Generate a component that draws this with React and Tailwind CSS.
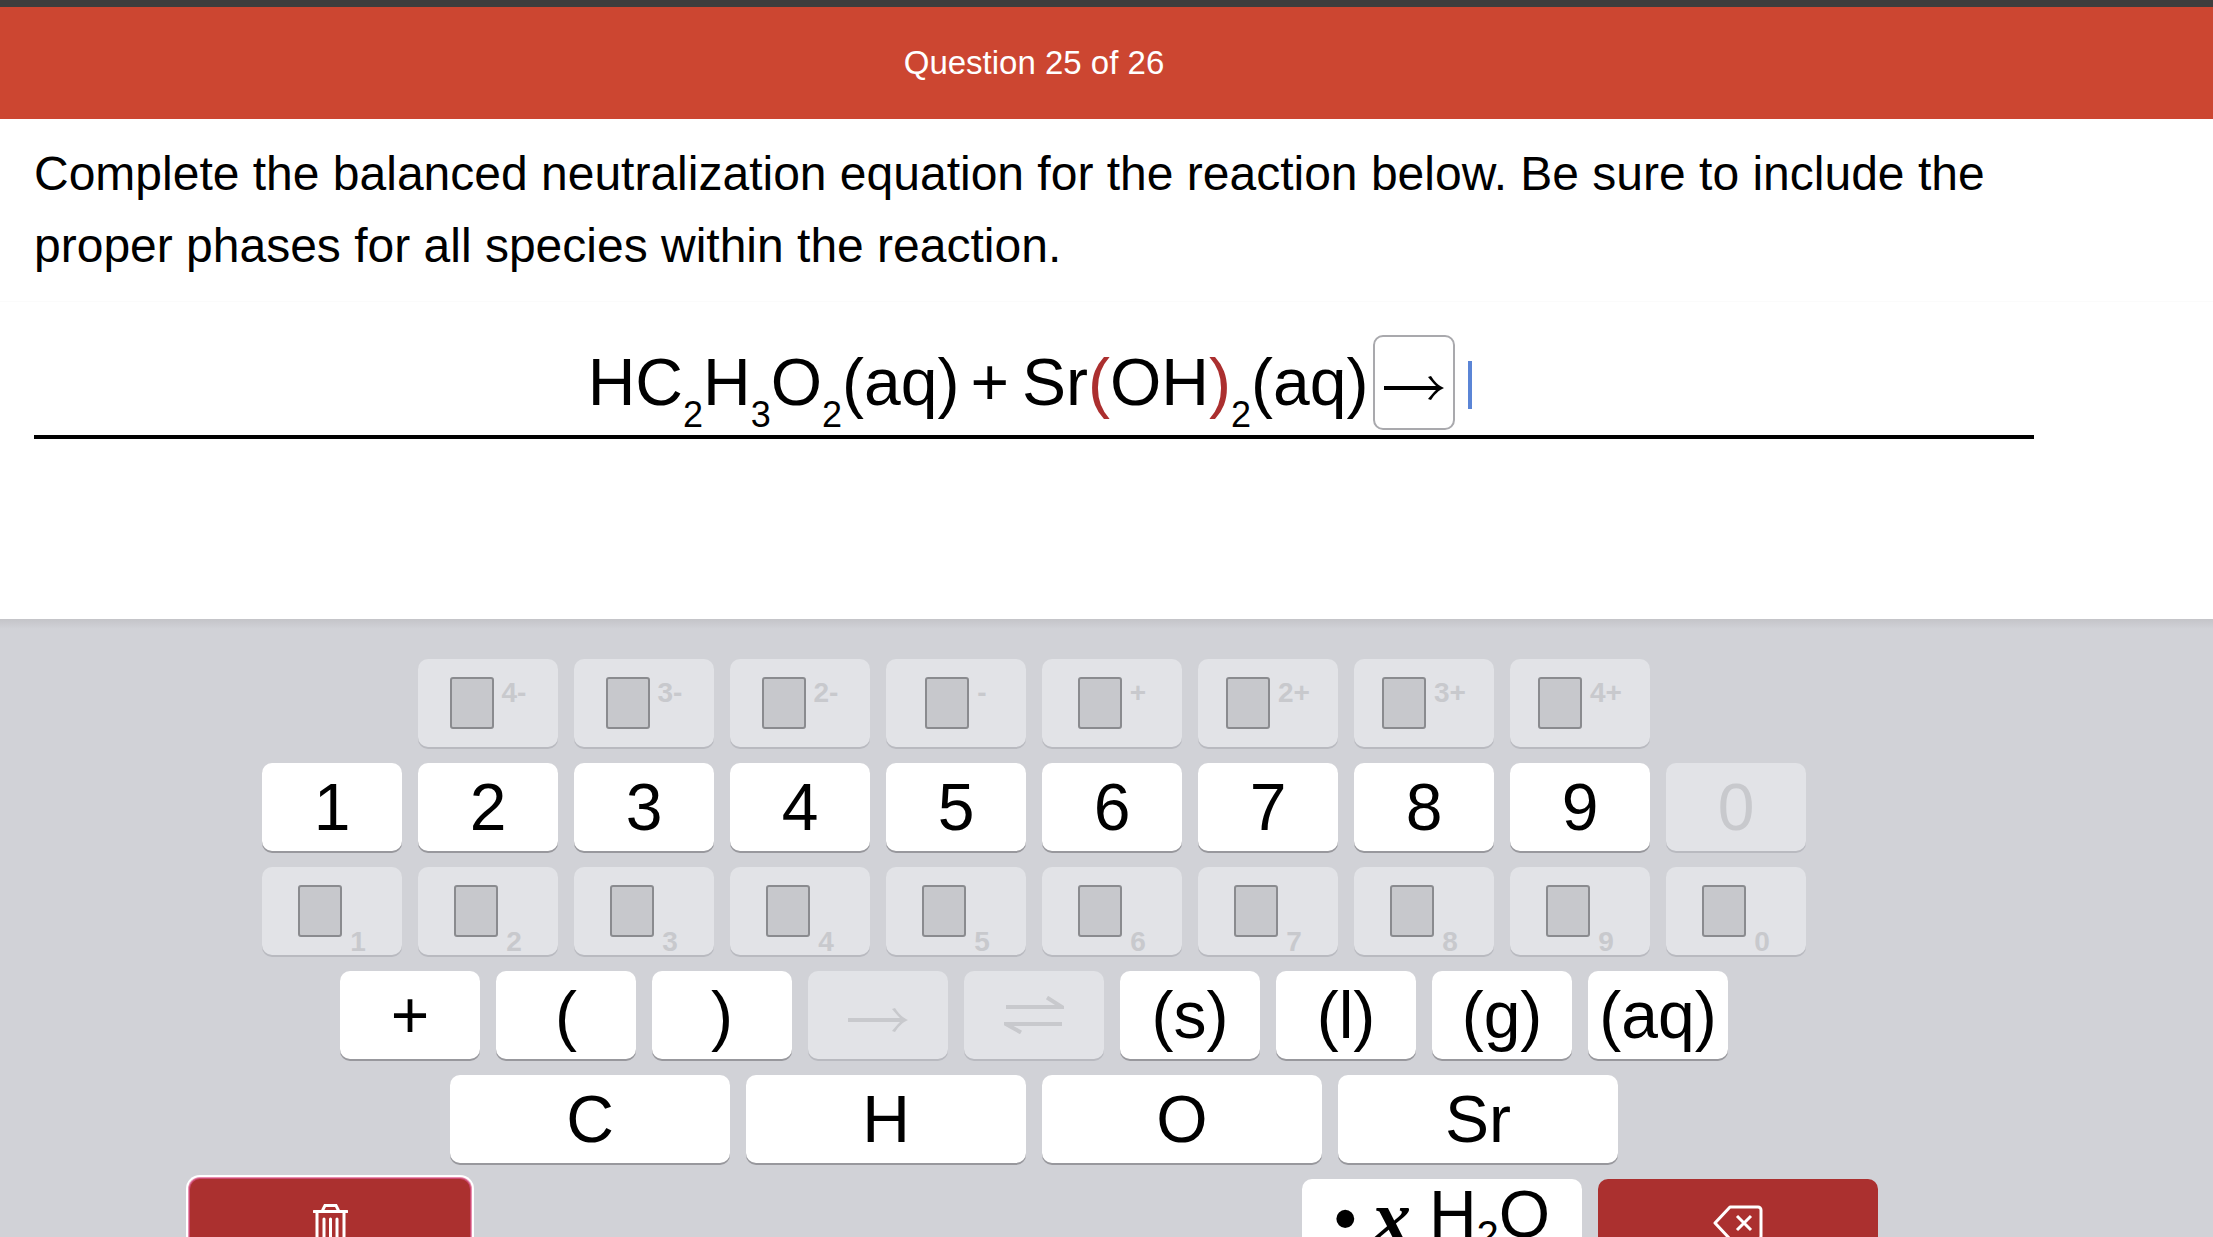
const sans = "font-['Liberation_Sans',sans-serif]";

const charges = ["4-", "3-", "2-", "-", "+", "2+", "3+", "4+"];
const digits = ["1", "2", "3", "4", "5", "6", "7", "8", "9"];
const subscripts = ["1", "2", "3", "4", "5", "6", "7", "8", "9", "0"];
const phases = ["(s)", "(l)", "(g)", "(aq)"];
const elements = ["C", "H", "O", "Sr"];

function Key({ children, disabled, wide, className = "" }) {
  return (
    <div
      className={`flex h-[88px] shrink-0 rounded-[10px] ${wide ? "w-[280px]" : "w-[140px]"} ${
        disabled
          ? "bg-[#e2e3e7] text-[#c8c9cd] shadow-[0_2px_0_#b9bac0]"
          : "bg-white text-black shadow-[0_2px_0_#98989d]"
      } ${className}`}
    >
      {children}
    </div>
  );
}

function TextKey({ label, disabled, wide }) {
  return (
    <Key disabled={disabled} wide={wide} className="items-center justify-center text-[66px] leading-none">
      {label}
    </Key>
  );
}

function Slot() {
  return <div className="h-[52px] w-[44px] shrink-0 rounded-[3px] border-2 border-[#8a8b8f] bg-[#c7c8cc]" />;
}

function ArrowGlyph({ className }) {
  return (
    <svg viewBox="0 0 60 24" className={className} fill="currentColor">
      <path d="M0 10H52C49 7.5 46 3 44 1L47 0C50 5 55 10 60 12C55 14 50 19 47 24L44 23C46 21 49 16.5 52 14H0Z" />
    </svg>
  );
}

function Equation() {
  const sub = "align-[-22px] text-[36px]";
  return (
    <div className="mx-[34px] flex h-[137px] w-[2000px] shrink-0 items-start justify-center border-b-4 border-black pr-[8px] pt-[33px]">
      <div className="mt-[14px] whitespace-nowrap text-[66px] leading-none text-black">
        HC<span className={sub}>2</span>H<span className={sub}>3</span>O<span className={sub}>2</span>(aq)
        <span className="ml-[11px] mr-[13px]">+</span>Sr<span className="text-[#ab2f2f]">(</span>OH
        <span className="text-[#ab2f2f]">)</span>
        <span className={sub}>2</span>(aq)
      </div>
      <div className="ml-[5px] flex h-[95px] w-[82px] items-center justify-center rounded-[10px] border-2 border-[#a9a9ad]">
        <ArrowGlyph className="mt-[11px] h-[24px] w-[60px] text-black" />
      </div>
      <div className="ml-[13px] mt-[26px] h-[48px] w-[4px] bg-[#5b85d6]" />
    </div>
  );
}

function Keyboard() {
  return (
    <div className="flex flex-1 flex-col gap-4 bg-[linear-gradient(#c4c4c8,#d1d2d7_10px)] pt-[40px]">
      <div className="flex w-[2068px] justify-center gap-4">
        {charges.map((c) => (
          <Key key={c} disabled className="justify-center gap-2 pt-[18px]">
            <Slot />
            <span className="mt-[2px] text-[28px] font-bold leading-[28px]">{c}</span>
          </Key>
        ))}
      </div>
      <div className="flex w-[2068px] justify-center gap-4">
        {digits.map((d) => (
          <TextKey key={d} label={d} />
        ))}
        <TextKey label="0" disabled />
      </div>
      <div className="flex w-[2068px] justify-center gap-4">
        {subscripts.map((s) => (
          <Key key={s} disabled className="justify-center gap-2 pt-[18px]">
            <Slot />
            <span className="mt-[43px] text-[28px] font-bold leading-[28px]">{s}</span>
          </Key>
        ))}
      </div>
      <div className="flex w-[2068px] justify-center gap-4">
        <TextKey label="+" />
        <TextKey label="(" />
        <TextKey label=")" />
        <Key disabled className="items-center justify-center pt-[10px]">
          <ArrowGlyph className="h-[24px] w-[60px]" />
        </Key>
        <Key disabled className="items-center justify-center">
          <svg viewBox="0 0 60 38" className="h-[38px] w-[60px]" fill="none" stroke="currentColor" strokeWidth="4">
            <path d="M2 11H58L43 1.5" />
            <path d="M58 28H2L17 36.5" />
          </svg>
        </Key>
        {phases.map((p) => (
          <TextKey key={p} label={p} />
        ))}
      </div>
      <div className="flex w-[2068px] justify-center gap-4">
        {elements.map((e) => (
          <TextKey key={e} label={e} wide />
        ))}
      </div>
      <div className="mx-[190px] flex w-[1688px] justify-between">
        <div className="flex h-[88px] w-[280px] justify-center rounded-[10px] bg-[#ab302f] pt-[24px] text-white shadow-[0_0_0_1px_#cb4a70,0_0_0_2px_#e88fae,0_0_0_4px_#fff]">
          <svg viewBox="0 0 35 46" className="h-[46px] w-[35px]" fill="none" stroke="currentColor" strokeWidth="3">
            <path d="M1 8.5H34" strokeLinecap="round" />
            <path d="M9.5 7.5L12 2.5H23L25.5 7.5" />
            <path d="M4 9V44H31V9" />
            <path d="M11 16V38M17.5 16V38M24 16V38" strokeLinecap="round" />
          </svg>
        </div>
        <div className="flex gap-4">
          <Key wide className="items-center justify-center pb-[10px] text-[66px] leading-none">
            <span>•</span>
            <span className="ml-[15px] mr-[18px] font-['Liberation_Serif',serif] text-[78px] font-bold italic">x</span>
            <span>
              H<span className="align-[-12px] text-[40px]">2</span>O
            </span>
          </Key>
          <div className="flex h-[88px] w-[280px] justify-center rounded-[10px] bg-[#ab302f] pt-[26px] text-white">
            <svg viewBox="0 0 50 36" className="h-[36px] w-[50px]" fill="none" stroke="currentColor" strokeWidth="3">
              <path d="M17 2H45A3 3 0 0 1 48 5V31A3 3 0 0 1 45 34H17L2 18Z" strokeLinejoin="round" />
              <path d="M24 11L38 25M38 11L24 25" />
            </svg>
          </div>
        </div>
      </div>
    </div>
  );
}

export default function App() {
  return (
    <div className={`flex h-[1237px] w-[2213px] flex-col overflow-hidden bg-white ${sans}`}>
      <div className="h-[7px] shrink-0 bg-[#3d3d3d]" />
      <div className="h-[112px] w-full shrink-0 bg-[#cc4631]">
        <div className="flex h-full w-[2068px] items-center justify-center text-[33px] text-white">
          Question 25 of 26
        </div>
      </div>
      <div className="h-[183px] shrink-0 border-b border-[#fbfbfb] px-[34px] pt-[19px] text-[48px] leading-[72px] text-black">
        <p className="w-[2000px]">
          Complete the balanced neutralization equation for the reaction below. Be sure to include the proper phases
          for all species within the reaction.
        </p>
      </div>
      <Equation />
      <div className="h-[180px] shrink-0" />
      <Keyboard />
    </div>
  );
}
